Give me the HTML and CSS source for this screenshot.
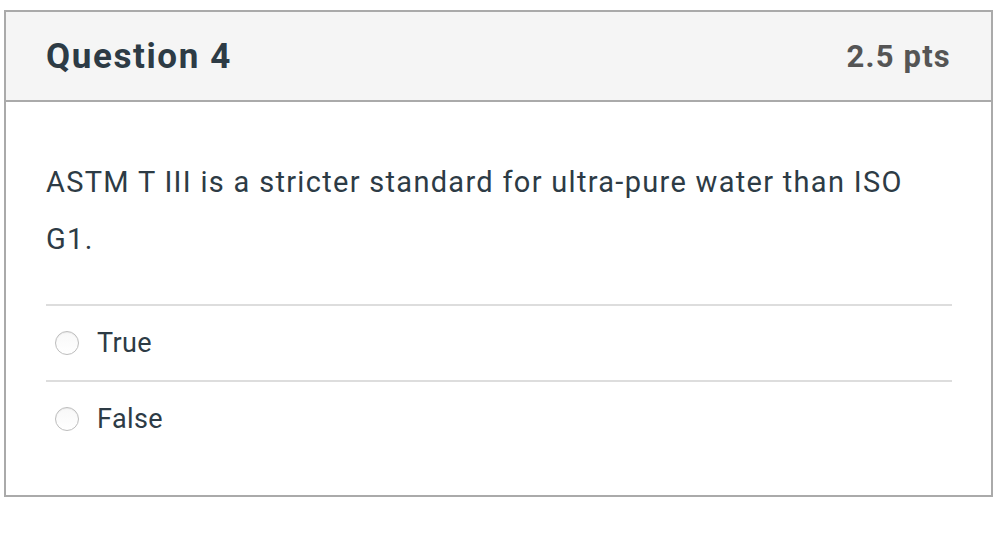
FILE: index.html
```html
<!DOCTYPE html>
<html>
<head>
<meta charset="utf-8">
<link rel="stylesheet" href="styles.css">
</head>
<body>
<div class="question">
  <div class="q-header">
    <h2 class="q-title">Question 4</h2>
    <span class="q-points">2.5 pts</span>
  </div>
  <div class="q-body">
    <p class="q-text">ASTM T III is a stricter standard for ultra-pure water than ISO G1.</p>
    <div class="answers">
      <label class="answer"><span class="radio"></span><span class="answer-label">True</span></label>
      <label class="answer"><span class="radio"></span><span class="answer-label">False</span></label>
    </div>
  </div>
</div>
</body>
</html>
```
FILE: styles.css
```css
html, body {
  margin: 0;
  padding: 0;
  background: #fff;
}
body {
  padding: 10px 5px 0 4px;
  font-family: Roboto, "Liberation Sans", sans-serif;
  color: #2d3b45;
}
.question {
  width: 985px;
  border: 2px solid #aaaaaa;
  box-sizing: content-box;
}
.q-header {
  display: flex;
  justify-content: space-between;
  align-items: center;
  height: 88px;
  padding: 0 41px 0 40px;
  background: #f5f5f5;
  border-bottom: 2px solid #aaaaaa;
}
.q-title {
  margin: 0;
  font-size: 35px;
  font-weight: 700;
  letter-spacing: 1.6px;
  color: #2d3b45;
  line-height: 1;
}
.q-points {
  font-size: 31px;
  font-weight: 700;
  letter-spacing: 1.2px;
  margin-right: -1px;
  color: #555555;
  line-height: 1;
}
.q-body {
  padding: 52px 39px 39px 40px;
}
.q-text {
  margin: 0 0 36px 0;
  max-width: 880px;
  font-size: 29px;
  letter-spacing: 1.3px;
  line-height: 57px;
}
.answers {
  border-top: 2px solid #dddddd;
}
.answer {
  display: flex;
  align-items: center;
  height: 74px;
  padding-left: 9px;
  border-bottom: 2px solid #dddddd;
}
.answer:last-child {
  border-bottom: none;
}
.radio {
  width: 22px;
  height: 22px;
  border: 1px solid #bdbdbd;
  border-radius: 50%;
  background: linear-gradient(#f8f8f8, #ffffff);
  box-shadow: inset 0 1px 1px rgba(0,0,0,0.06);
  flex: none;
}
.answer-label {
  margin-left: 18px;
  font-size: 27px;
  letter-spacing: 0.4px;
  color: #2d3b45;
}
```
